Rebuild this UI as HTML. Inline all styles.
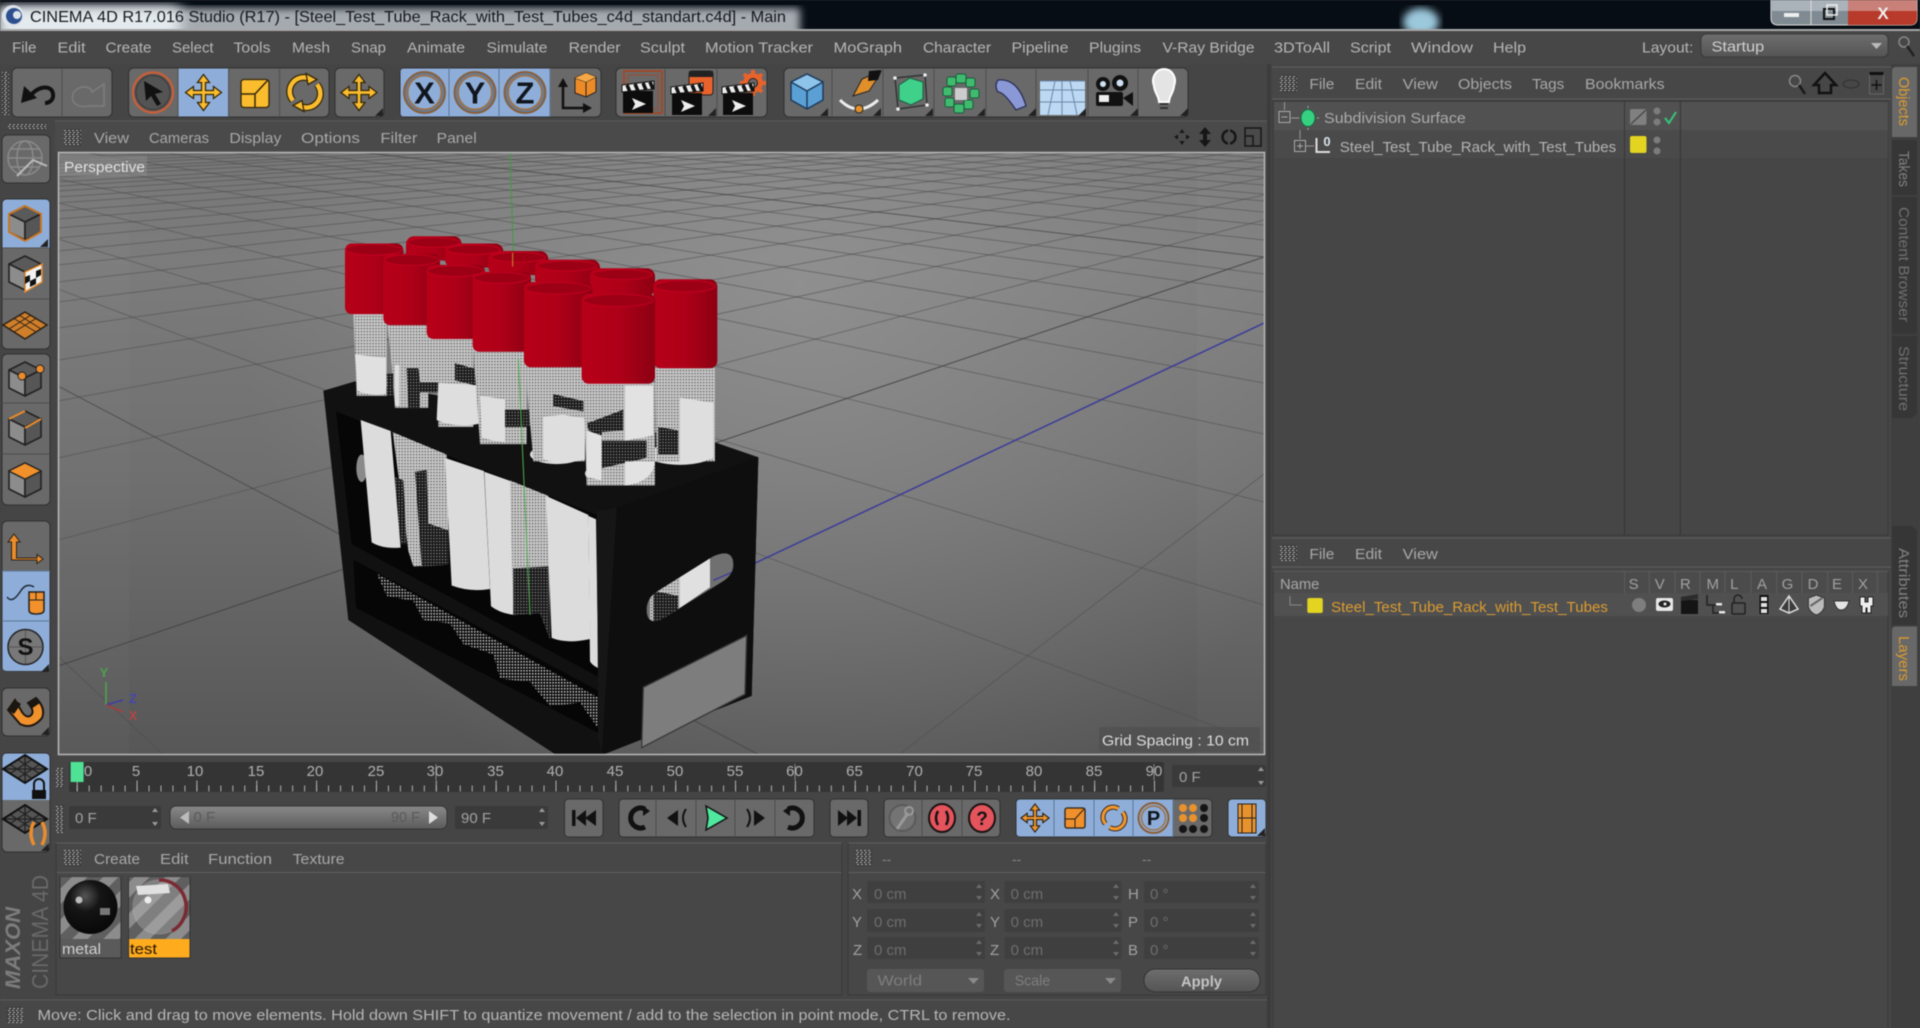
<!DOCTYPE html>
<html><head><meta charset="utf-8"><title>CINEMA 4D</title>
<style>
html,body{margin:0;padding:0;background:#454545;overflow:hidden;width:1920px;height:1028px}
#w{width:1920px;height:1028px;overflow:hidden;position:relative}
svg{display:block;overflow:hidden;font-family:"Liberation Sans",sans-serif;filter:blur(.4px)}
.m{fill:#b6b6b6;font-size:15px}
.p{fill:#a8a8a8;font-size:15px}
.d{fill:#6e6e6e;font-size:15px}
.l{fill:#a2a2a2;font-size:15px}
.t{fill:#b0b0b0;font-size:15px;text-anchor:middle}
.btn{fill:#696969;stroke:#303030;stroke-width:1}
.blue{fill:#8eaed9}
.dv{stroke:#4e4e4e;stroke-width:1}
.fld{fill:#3a3a3a}
.fd2{fill:#3f3f3f}
.y{fill:#fbbd2e;stroke:#33270a;stroke-width:1.3}
.o{fill:#f0902c;stroke:#2a2018;stroke-width:1.3}
.c{text-anchor:middle}
</style></head><body><div id="w">
<svg width="1920" height="1028" viewBox="0 0 1920 1028" xmlns="http://www.w3.org/2000/svg">
<defs>
<pattern id="grip" width="4" height="4" patternUnits="userSpaceOnUse"><rect width="4" height="4" fill="#3c3c3c"/><rect x="1" y="0" width="2" height="1" fill="#b0b0b0"/><rect x="0" y="2" width="2" height="1" fill="#b0b0b0"/></pattern>
<pattern id="dw" width="8.7" height="8.7" patternUnits="userSpaceOnUse"><rect width="8.7" height="8.7" fill="#c6c6c6"/><rect width="3.5" height="3.5" fill="#4c4c4c"/></pattern>
<pattern id="dd" width="8.7" height="8.7" patternUnits="userSpaceOnUse"><rect width="8.7" height="8.7" fill="#1a1a1a"/><rect width="3" height="3" fill="#bbbbbb"/></pattern>
<pattern id="db" width="8.7" height="8.7" patternUnits="userSpaceOnUse"><rect width="8.7" height="8.7" fill="#080808"/><rect width="4.5" height="4.5" fill="#d4d4d4"/></pattern>
<pattern id="stripe" width="22" height="22" patternUnits="userSpaceOnUse" patternTransform="rotate(45)"><rect width="22" height="22" fill="#8c8c8c"/><rect width="11" height="22" fill="#5f5f5f"/></pattern>
<linearGradient id="vg" x1="0" y1="0" x2="0" y2="1"><stop offset="0" stop-color="#777"/><stop offset=".18" stop-color="#7c7c7c"/><stop offset=".55" stop-color="#6f6f6f"/><stop offset="1" stop-color="#575757"/></linearGradient>
<radialGradient id="vr" gradientUnits="userSpaceOnUse" cx="800" cy="290" r="560"><stop offset="0" stop-color="#a0a0a0" stop-opacity=".55"/><stop offset="1" stop-color="#a0a0a0" stop-opacity="0"/></radialGradient>
<linearGradient id="red" x1="0" x2="1" y1="0" y2="0"><stop offset="0" stop-color="#b60018"/><stop offset=".5" stop-color="#ae0018"/><stop offset="1" stop-color="#8c0012"/></linearGradient>
<linearGradient id="sl" x1="0" x2="0" y1="0" y2="1"><stop offset="0" stop-color="#888"/><stop offset="1" stop-color="#5c5c5c"/></linearGradient>
<linearGradient id="dr" x1="0" x2="0" y1="0" y2="1"><stop offset="0" stop-color="#6e6e6e"/><stop offset="1" stop-color="#545454"/></linearGradient>
<radialGradient id="ball" cx=".4" cy=".3" r=".8"><stop offset="0" stop-color="#555"/><stop offset=".35" stop-color="#151515"/><stop offset="1" stop-color="#050505"/></radialGradient>
<filter id="b8"><feGaussianBlur stdDeviation="7"/></filter>
<filter id="b3"><feGaussianBlur stdDeviation="4"/></filter>
<clipPath id="vc"><rect x="59" y="153" width="1205" height="601"/></clipPath>
<clipPath id="hole"><path d="M1040 1130Q1040 1095 1075 1075L1240 975Q1300 950 1300 1000Q1300 1030 1265 1050L1090 1155Q1040 1180 1040 1130Z"/></clipPath>
<path id="mv" d="M0-18L6-10H2V-2H10V-6L18 0L10 6V2H2V10H6L0 18L-6 10H-2V2H-10V6L-18 0L-10-6V-2H-2V-10H-6Z"/>
<g id="cube"><path d="M0-17L16-9L0-1L-16-9Z" fill="#5a5a5a" stroke="#222" stroke-width="1.6" stroke-linejoin="round"/><path d="M-16-9L0-1V17L-16 9Z" fill="#8c8c8c" stroke="#222" stroke-width="1.6" stroke-linejoin="round"/><path d="M16-9L0-1V17L16 9Z" fill="#565656" stroke="#222" stroke-width="1.6" stroke-linejoin="round"/></g>
<g id="clap"><rect x="-15" y="-4" width="30" height="22" fill="#0c0c0c"/><path d="M-16-10L16-14V-6L-16-3Z" fill="#eee" stroke="#111"/><path d="M-11-10l3 7M-3-11l3 7M5-12l3 7M12-13l3 7" stroke="#111" stroke-width="3.5"/><path d="M-6 3L8 9L-6 15L-3 9Z" fill="#eee"/></g>
<g id="plate"><path d="M0-14L22 0L0 14L-22 0Z" stroke="#222" stroke-width="1.5" fill="#555"/><g stroke="#222" stroke-width="1.3"><path d="M-15-4.500L7 9.500M-7.500-9.500L14.500 4.500M7-9.500L-15 4.500M14.500-4.500L-7.500 9.500M0-14L0 14M-22 0H22"/></g></g>
<path id="tri" d="M0 8L8 8L8 0Z" fill="#222"/>
</defs>

<rect width="1920" height="1028" fill="#454545"/>

<!-- title bar -->
<rect width="1920" height="30" fill="#070d14"/>
<rect x="0" y="8" width="800" height="30" fill="#a4aab0" filter="url(#b3)"/>
<rect x="0" y="6" width="180" height="36" fill="#e4ebef" filter="url(#b8)"/>
<ellipse cx="1421" cy="22" rx="18" ry="14" fill="#9cc8dc" filter="url(#b3)"/>
<circle cx="13" cy="16" r="11" fill="#dfe4ea"/><circle cx="14" cy="16" r="8" fill="#2d4f8e"/><circle cx="17" cy="15" r="4" fill="#dfe4ea"/>
<text x="30" y="22" font-size="16" fill="#16181c" textLength="756" lengthAdjust="spacingAndGlyphs">CINEMA 4D R17.016 Studio (R17) - [Steel_Test_Tube_Rack_with_Test_Tubes_c4d_standart.c4d] - Main</text>
<path d="M1771 0V18Q1771 25 1778 25H1910Q1917 25 1917 18V0Z" fill="#7f8a92" stroke="#ddd"/>
<path d="M1848 0H1917V18Q1917 25 1910 25H1848Z" fill="#b83a2a"/><rect x="1848" y="0" width="69" height="11" fill="#c98078"/>
<rect x="1772" y="0" width="76" height="11" fill="#aab3ba"/>
<path d="M1811 0V25" stroke="#ddd"/>
<rect x="1784" y="13" width="15" height="4" fill="#eee"/>
<rect x="1824" y="9" width="10" height="10" fill="none" stroke="#111" stroke-width="2"/><rect x="1827" y="5" width="10" height="10" fill="none" stroke="#eee" stroke-width="1.5"/>
<text x="1883" y="19" font-size="17" font-weight="bold" fill="#eee" class="c">X</text>
<rect y="29" width="1920" height="2" fill="#a8a8a8"/>

<!-- menu -->
<rect y="31" width="1920" height="33" fill="#474747"/>
<g class="m">
<text x="12" y="52.500" textLength="24.500" lengthAdjust="spacingAndGlyphs">File</text>
<text x="57.500" y="52.500" textLength="28" lengthAdjust="spacingAndGlyphs">Edit</text>
<text x="105.500" y="52.500" textLength="46" lengthAdjust="spacingAndGlyphs">Create</text>
<text x="172" y="52.500" textLength="41.600" lengthAdjust="spacingAndGlyphs">Select</text>
<text x="233.500" y="52.500" textLength="37" lengthAdjust="spacingAndGlyphs">Tools</text>
<text x="292" y="52.500" textLength="38" lengthAdjust="spacingAndGlyphs">Mesh</text>
<text x="351" y="52.500" textLength="35" lengthAdjust="spacingAndGlyphs">Snap</text>
<text x="407" y="52.500" textLength="58" lengthAdjust="spacingAndGlyphs">Animate</text>
<text x="486.500" y="52.500" textLength="61" lengthAdjust="spacingAndGlyphs">Simulate</text>
<text x="568.600" y="52.500" textLength="52" lengthAdjust="spacingAndGlyphs">Render</text>
<text x="640" y="52.500" textLength="45" lengthAdjust="spacingAndGlyphs">Sculpt</text>
<text x="705" y="52.500" textLength="108" lengthAdjust="spacingAndGlyphs">Motion Tracker</text>
<text x="833.500" y="52.500" textLength="68.500" lengthAdjust="spacingAndGlyphs">MoGraph</text>
<text x="923" y="52.500" textLength="68" lengthAdjust="spacingAndGlyphs">Character</text>
<text x="1011.500" y="52.500" textLength="57" lengthAdjust="spacingAndGlyphs">Pipeline</text>
<text x="1089" y="52.500" textLength="52" lengthAdjust="spacingAndGlyphs">Plugins</text>
<text x="1162.500" y="52.500" textLength="92" lengthAdjust="spacingAndGlyphs">V-Ray Bridge</text>
<text x="1274" y="52.500" textLength="56" lengthAdjust="spacingAndGlyphs">3DToAll</text>
<text x="1350" y="52.500" textLength="41" lengthAdjust="spacingAndGlyphs">Script</text>
<text x="1411" y="52.500" textLength="62" lengthAdjust="spacingAndGlyphs">Window</text>
<text x="1493" y="52.500" textLength="33" lengthAdjust="spacingAndGlyphs">Help</text>
<text x="1642" y="52.500" textLength="51.400" lengthAdjust="spacingAndGlyphs">Layout:</text>
</g>
<rect x="1701" y="34" width="187" height="23" rx="5" fill="url(#dr)" stroke="#3a3a3a"/>
<text x="1711.500" y="51.500" class="m" textLength="52.700" lengthAdjust="spacingAndGlyphs" style="fill:#d0d0d0">Startup</text>
<path d="M1871 43H1882L1876.500 49Z" fill="#bbb"/>
<circle cx="1904" cy="42" r="5" fill="none" stroke="#888" stroke-width="1.5"/><path d="M1907 46L1914 56" stroke="#222" stroke-width="2.500"/>

<!-- top toolbar -->
<rect x="2" y="72" width="7" height="43" fill="url(#grip)"/>
<rect x="12" y="68" width="100" height="49" rx="5" class="btn"/>
<path d="M62 68V117" class="dv"/>
<path d="M30 97C36 86 52 84 53 94C54 100 49 103 45 103" fill="none" stroke="#111" stroke-width="4"/><path d="M21 103L24 86L37 98Z" fill="#111"/>
<path d="M73 94C76 86 90 84 92 92L104 84V106H88C80 108 70 104 73 94Z" fill="none" stroke="#7e7e7e" stroke-width="1.500"/>

<rect x="128.600" y="68" width="200.400" height="49" rx="5" class="btn"/>
<rect x="178" y="68.500" width="50.500" height="48" class="blue"/>
<path d="M178 68V117M228.600 68V117M279.600 68V117" class="dv"/>
<ellipse cx="153" cy="92.500" rx="20" ry="20" fill="#545454" stroke="#c4603c" stroke-width="2.500"/>
<ellipse cx="153" cy="92.500" rx="17" ry="17" fill="none" stroke="#3a3a3a"/>
<path d="M144 81L163 92L155 94L161 104L157 106L151 96L146 101Z" fill="#111"/>
<use href="#mv" x="203.500" y="92.500" class="y"/>
<rect x="241" y="79.500" width="28" height="28" rx="3" class="y"/>
<path d="M241 94H255V107.500M255 94L268 80" fill="none" stroke="#33270a" stroke-width="1.500"/>
<g transform="translate(305,92.500)"><path d="M-12 8A14 14 0 0 1 6-13M12-8A14 14 0 0 1-6 13" fill="none" stroke="#33270a" stroke-width="7"/><path d="M-12 8A14 14 0 0 1 6-13M12-8A14 14 0 0 1-6 13" fill="none" stroke="#fbbd2e" stroke-width="4.500"/><path d="M1-19L12-13L3-8ZM-1 19L-12 13L-3 8Z" class="y"/></g>

<rect x="335" y="68" width="49" height="49" rx="5" class="btn"/>
<use href="#mv" x="359" y="92.500" class="y"/><use href="#tri" x="375" y="108"/>

<rect x="400" y="68" width="201" height="49" rx="5" class="btn"/>
<rect x="400.500" y="68.500" width="150" height="48" rx="3" class="blue"/>
<path d="M449 68V117M499 68V117M550 68V117" stroke="#5d7596"/>
<g fill="#5f7fa8" stroke="#8a5f38" stroke-width="2"><circle cx="424.500" cy="92.500" r="20.500"/><circle cx="475" cy="92.500" r="20.500"/><circle cx="525" cy="92.500" r="20.500"/></g>
<g fill="#8eaed9" stroke="#9c7248" stroke-width="2"><circle cx="424.500" cy="92.500" r="17"/><circle cx="475" cy="92.500" r="17"/><circle cx="525" cy="92.500" r="17"/></g>
<g font-size="31" font-weight="bold" fill="#11161e" class="c"><text x="424.500" y="103.500">X</text><text x="475" y="103.500">Y</text><text x="525" y="103.500">Z</text></g>
<path d="M563 81V108H590" fill="none" stroke="#111" stroke-width="2.500"/><path d="M563 78L558 87H568ZM592 108L583 103V113Z" fill="#111"/>
<path d="M575 78L586 73L596 77V92L586 97L575 93Z" fill="#ed8b27" stroke="#222"/><path d="M575 78L586 82L596 77M586 82V97" fill="none" stroke="#222"/><path d="M575 78L586 73L596 77L586 82Z" fill="#f6a745"/>

<rect x="616" y="68" width="151" height="49" rx="5" class="btn"/>
<path d="M665 68V117M717 68V117" class="dv"/>
<rect x="624" y="71" width="38" height="42" fill="none" stroke="#9e4a2a" stroke-width="2"/><rect x="628" y="75" width="30" height="34" fill="none" stroke="#9e4a2a" stroke-width="1"/>
<use href="#clap" x="638" y="95"/>
<rect x="689" y="71" width="24" height="24" rx="3" fill="#e8622b" stroke="#222"/><rect x="689" y="71" width="24" height="6" fill="#222"/>
<use href="#clap" x="687" y="97"/><use href="#tri" x="708" y="108"/>
<g transform="translate(753,83)"><circle r="10" fill="#e8622b"/><circle r="4.500" fill="#696969" stroke="#222"/><path d="M0-13V-8M0 13V8M-13 0H-8M13 0H8M-9-9L-6-6M9 9L6 6M-9 9L-6 6M9-9L6-6" stroke="#e8622b" stroke-width="4"/></g>
<use href="#clap" x="738" y="97"/>

<rect x="784" y="68" width="404" height="49" rx="5" class="btn"/>
<path d="M832 68V117M883 68V117M934 68V117M986 68V117M1036 68V117M1088 68V117M1138 68V117" class="dv"/>
<g transform="translate(807,91)" stroke="#1e3a5c" stroke-width="1.500" stroke-linejoin="round"><path d="M0-17L16-9V9L0 18L-16 9V-9Z" fill="#5aa0d4"/><path d="M0-17L16-9L0 0L-16-9Z" fill="#8fc4ea"/><path d="M0 0V18" /></g>
<use href="#tri" x="820" y="108"/>
<path d="M881 71L862 79L853 96L869 91L879 76Z" fill="#e08f2a" stroke="#222"/><path d="M881 70L869 71L868 81L878 80Z" fill="#111"/>
<path d="M840 100Q858 118 878 100" fill="none" stroke="#eee" stroke-width="3"/><circle cx="859" cy="109" r="4" fill="#e08f2a" stroke="#222"/><use href="#tri" x="873" y="108"/>
<path d="M895 78L925 75L927 105L898 109Z" fill="none" stroke="#333" stroke-width="1.500"/>
<path d="M899 85L910 78L923 82L923 99L911 105L899 100Z" fill="#3fd08a" stroke="#1a5a3a"/><g fill="#eee"><circle cx="895" cy="78" r="1.800"/><circle cx="925" cy="75" r="1.800"/><circle cx="927" cy="105" r="1.800"/><circle cx="898" cy="109" r="1.800"/></g><use href="#tri" x="925" y="108"/>
<g fill="#3fba6e" stroke="#1a5a3a"><rect x="956" y="74" width="10" height="9" rx="2"/><rect x="966" y="78" width="9" height="9" rx="2"/><rect x="970" y="89" width="9" height="9" rx="2"/><rect x="964" y="100" width="9" height="9" rx="2"/><rect x="954" y="104" width="10" height="9" rx="2"/><rect x="945" y="98" width="9" height="9" rx="2"/><rect x="943" y="87" width="9" height="9" rx="2"/><rect x="947" y="77" width="9" height="9" rx="2"/></g><rect x="955" y="88" width="12" height="12" fill="#ccc"/><use href="#tri" x="977" y="108"/>
<path d="M998 80Q1018 78 1026 106L1016 110Q1004 92 998 92Q994 86 998 80Z" fill="#8a98d6" stroke="#2a2f55" stroke-width="1.300"/><use href="#tri" x="1028" y="108"/>
<rect x="1040" y="81" width="45" height="34" fill="#bcd8f2"/><path d="M1040 81H1085M1040 90H1085M1040 102H1085M1055 81L1048 115M1062 81V115M1070 81L1077 115" stroke="#6a88a8"/><use href="#tri" x="1078" y="108"/>
<g transform="translate(1112,93)"><circle cx="-9" cy="-9" r="7" fill="#111"/><circle cx="-9" cy="-9" r="3" fill="#cfe0f0"/><circle cx="8" cy="-10" r="8" fill="#111"/><circle cx="8" cy="-10" r="3.500" fill="#cfe0f0"/><rect x="-16" y="-1" width="27" height="14" rx="2" fill="#111"/><rect x="-13" y="2" width="10" height="7" fill="#eee"/><path d="M11 5L21-1V13Z" fill="#111"/></g><use href="#tri" x="1130" y="108"/>
<g transform="translate(1164,90)"><path d="M-10-4A11 12 0 1 1 10-4C10 2 5 6 5 12H-5C-5 6-10 2-10-4Z" fill="#e4e4e4" stroke="#fff" stroke-width="2"/><path d="M-4 14H4M-4 18H4" stroke="#333" stroke-width="2"/></g><use href="#tri" x="1180" y="108"/>

<!-- left toolbar -->
<rect x="8" y="123" width="38" height="7" fill="url(#grip)"/>
<rect x="2" y="135" width="48" height="48" rx="5" class="btn"/>
<g transform="translate(25,158)" fill="none" stroke="#8a8a8a" stroke-width="1.500"><circle r="17"/><ellipse rx="8" ry="17"/><path d="M-17 0H17M-14-9H14M-14 9H14"/><path d="M-8 18L8 2L22 8" stroke="#bbb" stroke-width="2"/></g>

<rect x="2" y="199" width="48" height="150" rx="5" class="btn"/>
<path d="M2.500 248V204Q2.500 199.500 7 199.500H45Q49.500 199.500 49.500 204V248Z" class="blue"/>
<path d="M2 248H50M2 299H50" class="dv"/>
<use href="#cube" x="25" y="223"/><path d="M25 206L41 214V232L25 241L9 232V214Z" fill="none" stroke="#c97726" stroke-width="2"/>
<use href="#tri" x="40" y="239"/>
<use href="#cube" x="25" y="273"/><path d="M25 272L42 264V282L25 292Z" fill="#f2f2f2" stroke="#e08a2e" stroke-width="1.500"/><path d="M25 277l5-2v6l-5 3zM30 281l6-3v6l-6 3zM36 271l5-2v6l-5 3z" fill="#111"/>
<path d="M25 312L47 325L25 339L3 325Z" fill="#cf7f2a" stroke="#2c2015" stroke-width="1.500"/><path d="M14 318.500L36 332M19 315L41 329M31 315L9 329M36 318.500L14 332" stroke="#2c2015"/>

<rect x="2" y="354" width="48" height="151" rx="5" class="btn"/>
<path d="M2 403H50M2 454H50" class="dv"/>
<use href="#cube" x="25" y="379"/><circle cx="22" cy="376" r="4" fill="#ea8c2c" stroke="#222"/><circle cx="40" cy="369" r="4" fill="#ea8c2c" stroke="#222"/>
<use href="#cube" x="25" y="428"/><path d="M9 419L25 411M25 428L41 419" stroke="#ea8c2c" stroke-width="2"/>
<use href="#cube" x="25" y="480"/><path d="M25 463L41 471L25 479L9 471Z" fill="#f2912b" stroke="#222"/>

<rect x="2" y="521" width="48" height="150" rx="5" class="btn"/>
<path d="M2.500 571H49.500V667Q49.500 671 45 671H7Q2.500 671 2.500 667Z" class="blue"/>
<path d="M2 571H50M2 621H50" stroke="#5d7596"/>
<path d="M14 534L20 542H16.500V558H37V554.500L43 559L37 563.500V560H11.500V542H8Z" fill="#ea8c2c" stroke="#2a2018"/>
<path d="M7 597Q12 604 20 592Q26 582 34 587" fill="none" stroke="#1d2a3a" stroke-width="1.500"/>
<path d="M29 592H44V610Q44 614 36 614Q29 614 29 610Z" fill="#f2912b" stroke="#222" stroke-width="1.500"/><path d="M29 600H44M36 592V600" stroke="#222"/>
<circle cx="25.500" cy="647" r="17.500" fill="#787878" stroke="#222" stroke-width="1.500"/><path d="M8 647H43M25.500 630V664" stroke="#555"/><text x="25.500" y="655" font-size="24" font-weight="bold" fill="#111" class="c">S</text><use href="#tri" x="41" y="664"/>

<rect x="2" y="688" width="48" height="48" rx="5" class="btn"/>
<path d="M15 700L8 710L20 724Q32 730 42 718Q46 708 36 698L28 703Q36 712 30 716Q26 718 22 712Z" fill="#f0912c" stroke="#1c1610" stroke-width="2"/><path d="M15 700L8 710L14 714L21 704ZM36 698L28 703L31 709L40 703Z" fill="#1c1610"/><use href="#tri" x="41" y="727"/>

<rect x="2" y="753" width="48" height="99" rx="5" class="btn"/>
<path d="M2.500 800V758Q2.500 753.500 7 753.500H45Q49.500 753.500 49.500 758V800Z" class="blue"/>
<use href="#plate" x="25" y="769" /><path d="M25 755L47 769L25 783L3 769Z" fill="none" stroke="#111" stroke-width="2"/>
<path d="M34 792V784a5 5 0 0 1 10 0v8" fill="none" stroke="#111" stroke-width="2"/><rect x="32" y="790" width="14" height="9" fill="#111"/>
<use href="#plate" x="25" y="819"/><path d="M25 805L47 819L25 833L3 819Z" fill="none" stroke="#111" stroke-width="2"/>
<path d="M34 822Q28 833 34 845M42 822Q48 833 42 845" fill="none" stroke="#ea8c2c" stroke-width="3.500"/><use href="#tri" x="41" y="843"/>

<g transform="rotate(-90)">
<text x="-989" y="20" font-size="21" font-weight="bold" font-style="italic" fill="#7d7d7d" textLength="82" lengthAdjust="spacingAndGlyphs">MAXON</text>
<text x="-989" y="48" font-size="23" fill="#696969" textLength="114" lengthAdjust="spacingAndGlyphs">CINEMA 4D</text>
</g>

<!-- view panel -->
<rect x="55" y="121" width="1213" height="31" fill="#4a4a4a"/>
<path d="M55 121H1268" stroke="#5c5c5c"/>
<rect x="64" y="129" width="17" height="17" fill="url(#grip)"/>
<g class="p">
<text x="94" y="143" textLength="35" lengthAdjust="spacingAndGlyphs">View</text>
<text x="149" y="143" textLength="60" lengthAdjust="spacingAndGlyphs">Cameras</text>
<text x="229.400" y="143" textLength="52" lengthAdjust="spacingAndGlyphs">Display</text>
<text x="301" y="143" textLength="59" lengthAdjust="spacingAndGlyphs">Options</text>
<text x="380.400" y="143" textLength="37" lengthAdjust="spacingAndGlyphs">Filter</text>
<text x="436.700" y="143" textLength="40" lengthAdjust="spacingAndGlyphs">Panel</text>
</g>
<g fill="#161616"><path d="M1182 129l2.500 4h-5zM1182 145l2.500-4h-5zM1174 137l4-2.500v5zM1190 137l-4-2.500v5z"/><path d="M1205 127l6 7h-4v6h4l-6 7l-6-7h4v-6h-4z"/></g>
<circle cx="1229" cy="137" r="6.500" fill="none" stroke="#161616" stroke-width="2.500"/><path d="M1229 128v18" stroke="#4a4a4a" stroke-width="2"/>
<rect x="1245" y="128" width="16" height="18" fill="none" stroke="#161616" stroke-width="1.500"/><path d="M1245 136H1253V146" fill="none" stroke="#161616" stroke-width="1.500"/>

<!-- viewport -->
<rect x="58" y="152" width="1207" height="603" fill="url(#vg)"/>
<rect x="58" y="152" width="1207" height="603" fill="url(#vr)"/>
<g clip-path="url(#vc)">
<rect x="59" y="153" width="70" height="601" fill="#fff" opacity=".02"/><rect x="1197" y="153" width="67" height="601" fill="#fff" opacity=".025"/>
<path fill="none" stroke="#4c4c4c" stroke-width="1" opacity=".55" d="M1264 474L892 760M1264 257L58 666M1264 220L58 540M1264 195L58 458M1264 178L58 401M1264 166L58 360M1264 157L58 328M1264 149L58 302M1264 143L58 282M1264 138L58 265M1264 134L58 251M1264 130L58 238M1264 127L58 228M1264 125L58 219M1264 122L58 211M1264 120L58 203M1264 118L58 197M1264 116L58 191M1264 115L58 186M1264 113L58 182M1264 112L58 177M1264 111L58 173M1264 110L58 170M1264 109L58 166M1264 108L58 163M1264 107L58 160M1264 106L58 158"/>
<path fill="none" stroke="#4c4c4c" stroke-width="1" opacity=".55" d="M58 656L169 760M58 289L1264 745M58 239L1264 605M58 203L1264 502M58 179L1264 434M58 161L1264 383M58 148L1264 346M58 137L1264 315M58 129L1264 292M58 123L1264 274M58 111L1264 240M58 105L1264 225M58 101L1264 212M58 97L1264 201M58 94L1264 194M58 91L1264 185M58 88L1264 177M58 86L1264 170M58 83L1264 163M58 82L1264 158M58 80L1264 154"/>
<path fill="none" stroke="#404040" stroke-width="1" opacity=".7" d="M58 117L1264 257M1264 257L58 666M58 386L769 760"/>
<path d="M510 152L515 300" stroke="#3f9a3f" stroke-width="1"/>
<path d="M713 583L1264 323" stroke="#3b3a9a" stroke-width="1.500"/>

<!-- rack: zoom coordinate space -->
<g transform="translate(300,220) scale(.33333,.34483)">
<path d="M70 495L165 468L1245 645L1375 688L1355 1380L905 1552L770 1552L145 1160Z" fill="#111"/>
<path d="M108 555L890 855L895 1325L155 940Z" fill="#060606"/>
<path d="M160 985L895 1365L900 1490L168 1125Z" fill="#060606"/>
<path d="M230 1025L895 1385V1475L840 1400L750 1410L690 1340L600 1330L580 1260L490 1230L450 1170L370 1160L340 1105L260 1090Z" fill="url(#db)"/>
<ellipse cx="185" cy="720" rx="16" ry="40" fill="#8a8a8a"/>
<!-- lower tubes -->
<path d="M278 615L440 680L445 900L440 1000L340 1005L325 960Z" fill="url(#dw)"/>
<path d="M345 730L380 725L385 880L445 900V1000L365 1005Z" fill="url(#dd)"/>
<path d="M285 745L310 755L320 940L300 940Z" fill="url(#dd)"/>
<path d="M182 580L272 612L302 950Q250 955 215 935Z" fill="#dcdcdc"/>
<path d="M435 690L552 728L570 1070Q510 1080 455 1060Z" fill="#dcdcdc"/>
<path d="M553 730L640 760V1145Q600 1140 573 1120Z" fill="#dcdcdc"/>
<path d="M630 755L745 800L750 1215L720 1140L640 1145Z" fill="url(#dw)"/>
<path d="M640 1010L745 1005L750 1215L720 1140L640 1145Z" fill="url(#dd)"/>
<path d="M738 800L865 855L870 1215Q800 1230 755 1212Z" fill="#dcdcdc"/>
<path d="M865 858L888 868L895 1300Q875 1290 870 1280Z" fill="#dcdcdc"/>
<!-- holes -->
<ellipse cx="770" cy="680" rx="80" ry="28" fill="#ddd"/><ellipse cx="960" cy="735" rx="105" ry="35" fill="#ddd"/><ellipse cx="1140" cy="680" rx="100" ry="30" fill="#ddd"/>
<!-- upper tubes -->
<path d="M1065 430H1245V700H1070Z" fill="url(#dw)"/><path d="M1140 515L1240 530V690Q1190 710 1140 705Z" fill="#dedede"/><path d="M1075 600L1135 610V680H1075Z" fill="url(#dd)"/>
<path d="M160 270H260V510H170Z" fill="url(#dw)"/><path d="M165 390L258 400V505Q210 512 172 495Z" fill="#e0e0e0"/>
<path d="M262 300H385V545H285L275 420Z" fill="url(#dw)"/><path d="M320 430H355L360 470H415V500H360V548H325Z" fill="url(#dd)"/><path d="M260 445H280V510H262Z" fill="url(#dd)"/><path d="M285 420H298V540H285Z" fill="#ddd"/>
<path d="M385 335H520V600H415V470H385Z" fill="url(#dw)"/><path d="M465 415L610 455V500L465 465Z" fill="url(#dd)"/><path d="M415 472L540 480V590Q470 605 410 580Z" fill="#dedede"/>
<path d="M520 375H680V650H540Z" fill="url(#dw)"/><path d="M615 550H730V600H615Z" fill="url(#dd)"/><path d="M540 510L615 520V645Q570 640 545 630Z" fill="#dedede"/>
<path d="M675 415H855V700H700Z" fill="url(#dw)"/><path d="M760 505L850 525V555L760 540Z" fill="url(#dd)"/><path d="M730 570L790 565L855 575V695Q790 710 730 695Z" fill="#dedede"/>
<path d="M850 470H1065V770H860Z" fill="url(#dw)"/><path d="M860 590L970 550V610L905 615V640H1040V690L905 720Z" fill="url(#dd)"/><path d="M975 480H1060V625L975 640Z" fill="#e2e2e2"/><path d="M860 610L905 625V755L860 745Z" fill="#e2e2e2"/><path d="M975 700H1065Q1060 760 975 770Z" fill="#e2e2e2"/>
<!-- caps -->
<g fill="url(#red)">
<rect x="318" y="47" width="167" height="70" rx="24"/><rect x="435" y="68" width="175" height="70" rx="24"/><rect x="565" y="90" width="180" height="70" rx="24"/><rect x="705" y="115" width="195" height="80" rx="24"/><rect x="870" y="140" width="195" height="80" rx="24"/>
<rect x="1060" y="172" width="192" height="258" rx="22"/>
<rect x="135" y="68" width="175" height="205" rx="20"/>
<rect x="250" y="98" width="170" height="207" rx="20"/>
<rect x="380" y="130" width="175" height="215" rx="20"/>
<rect x="518" y="150" width="175" height="232" rx="20"/>
<rect x="672" y="180" width="205" height="247" rx="20"/>
<rect x="845" y="213" width="220" height="262" rx="22"/>
</g>
<g fill="#9c0015" stroke="#c4001f" stroke-width="3">
<ellipse cx="402" cy="65" rx="78" ry="14"/><ellipse cx="522" cy="86" rx="80" ry="14"/><ellipse cx="655" cy="108" rx="82" ry="14"/><ellipse cx="802" cy="133" rx="90" ry="15"/><ellipse cx="967" cy="158" rx="90" ry="15"/>
<ellipse cx="1156" cy="192" rx="90" ry="17"/>
<ellipse cx="222" cy="86" rx="84" ry="16"/><ellipse cx="335" cy="116" rx="82" ry="16"/><ellipse cx="467" cy="148" rx="84" ry="16"/><ellipse cx="605" cy="168" rx="84" ry="16"/><ellipse cx="774" cy="198" rx="98" ry="17"/><ellipse cx="955" cy="233" rx="105" ry="18"/>
</g>
<path d="M638 95V135" stroke="#c8902a" stroke-width="3"/>
<path d="M655 400L690 1145" stroke="#4fae4f" stroke-width="3"/>
<!-- side -->
<path d="M950 835L1375 688L1355 1380L905 1552Z" fill="#0e0e0e"/>
<path d="M890 845L950 835L905 1552L895 1500Z" fill="#161616"/>
<path d="M1040 1130Q1040 1095 1075 1075L1240 975Q1300 950 1300 1000Q1300 1030 1265 1050L1090 1155Q1040 1180 1040 1130Z" fill="#707070"/>
<g clip-path="url(#hole)"><path d="M1050 1060L1140 1010V1130L1050 1170Z" fill="url(#dw)"/><path d="M1060 1075L1135 1090V1135L1060 1170Z" fill="url(#dd)"/><path d="M1140 1010L1230 975V1065L1140 1125Z" fill="#e0e0e0"/><path d="M1240 1045L1300 1020" stroke="#3b3a9a" stroke-width="4"/></g>
<path d="M1030 1355L1340 1205L1335 1375L1025 1530Z" fill="#7d7d7d" stroke="#3a3a3a" stroke-width="4"/>
</g>
<!-- gizmo -->
<path d="M106 705V682" stroke="#4ea64e" stroke-width="1.500"/><path d="M106 705L123 700" stroke="#3d3da8" stroke-width="1.500"/><path d="M106 705L123 712" stroke="#a83d3d" stroke-width="1.500"/>
<g font-size="13" font-weight="bold" class="c"><text x="104" y="677" fill="#4fa04f">Y</text><text x="133" y="703" fill="#4646b0">Z</text><text x="133" y="720" fill="#b04646">X</text></g>
</g>
<rect x="58.500" y="152.500" width="1206" height="602" fill="none" stroke="#b8b8b8" stroke-width="1.500"/>
<rect x="60" y="156" width="87" height="20" fill="#8a8a8a" opacity=".55"/>
<text x="64" y="172" font-size="15" fill="#e2e2e2" textLength="81" lengthAdjust="spacingAndGlyphs">Perspective</text>
<rect x="1099" y="727" width="161" height="25" rx="2" fill="#4f4f4f" opacity=".7"/>
<text x="1102" y="745.500" font-size="15" fill="#ddd" textLength="147" lengthAdjust="spacingAndGlyphs">Grid Spacing : 10 cm</text>

<!-- timeline -->
<rect x="56" y="768" width="8" height="20" fill="url(#grip)"/>
<rect x="69" y="762" width="1095" height="30" rx="2" fill="#343434"/>
<path d="M76.700 788.500H1155" stroke="#b0b0b0" stroke-width="6" stroke-dasharray="1 10.970"/>
<path d="M76.700 786H1155" stroke="#b0b0b0" stroke-width="11" stroke-dasharray="1 58.850"/>
<path d="M436 764V780M795 764V780M1154 764V780" stroke="#8c8c8c"/>
<rect x="70.600" y="762" width="13" height="20" fill="#4fe296"/>
<g class="t">
<text x="88" y="776">0</text><text x="136" y="776">5</text><text x="195" y="776">10</text><text x="256" y="776">15</text><text x="315" y="776">20</text><text x="376" y="776">25</text><text x="435" y="776">30</text><text x="495.500" y="776">35</text><text x="555" y="776">40</text><text x="615" y="776">45</text><text x="675" y="776">50</text><text x="735" y="776">55</text><text x="794.500" y="776">60</text><text x="854.500" y="776">65</text><text x="914.500" y="776">70</text><text x="974" y="776">75</text><text x="1034" y="776">80</text><text x="1094" y="776">85</text><text x="1154" y="776">90</text>
</g>
<rect x="1172" y="765" width="94" height="22" rx="2" class="fld"/>
<text x="1179" y="782" class="l">0 F</text><path d="M1258 771l3-4 3 4zM1258 781l3 4 3-4z" fill="#999"/>

<rect x="56" y="805" width="8" height="28" fill="url(#grip)"/>
<rect x="69" y="806" width="92" height="23" rx="2" class="fld"/>
<text x="75" y="823" class="l">0 F</text><path d="M152 812l3-4 3 4zM152 822l3 4 3-4z" fill="#999"/>
<rect x="170" y="806" width="277" height="23" rx="6" fill="url(#sl)" stroke="#333"/>
<path d="M189 811V824L180 817.500Z" fill="#bbb"/><path d="M429 811V824L438 817.500Z" fill="#ddd"/>
<text x="193.500" y="822" font-size="15" fill="#5a5a5a">0 F</text><text x="391" y="822" font-size="15" fill="#5a5a5a" textLength="29" lengthAdjust="spacingAndGlyphs">90 F</text>
<rect x="455" y="806" width="93" height="23" rx="2" class="fld"/>
<text x="461" y="823" class="l" textLength="30" lengthAdjust="spacingAndGlyphs">90 F</text><path d="M539 812l3-4 3 4zM539 822l3 4 3-4z" fill="#999"/>

<!-- transport -->
<rect x="564.500" y="799" width="38.500" height="38" rx="4" class="btn"/>
<rect x="572" y="810" width="3.500" height="16" fill="#111"/><path d="M576 818L586 810V826ZM585 818L596 810V826Z" fill="#111"/>
<rect x="619" y="799" width="195" height="38" rx="4" class="btn"/>
<path d="M656 799V837M696 799V837M735 799V837M775 799V837" class="dv"/>
<path d="M645 809A10 10 0 1 0 645 827" fill="none" stroke="#111" stroke-width="5"/><path d="M643 806L650 811L643 816Z" fill="#111"/>
<path d="M667 818L678 810V826Z" fill="#111"/><path d="M686 809Q680 818 686 827" fill="none" stroke="#111" stroke-width="2"/>
<path d="M706 806L727 818L706 830L708 818Z" fill="#4fe89e" stroke="#111" stroke-width="1.500"/>
<path d="M747 809Q753 818 747 827" fill="none" stroke="#111" stroke-width="2"/><path d="M754 810L765 818L754 826Z" fill="#111"/>
<path d="M788 809A10 10 0 1 1 788 827" fill="none" stroke="#111" stroke-width="5"/><path d="M790 806L783 811L790 816Z" fill="#111"/>
<rect x="830" y="799" width="38" height="38" rx="4" class="btn"/>
<path d="M838 810L848 818L838 826ZM847 810L857 818L847 826Z" fill="#111"/><rect x="857.500" y="810" width="3.500" height="16" fill="#111"/>
<rect x="884" y="799" width="116" height="38" rx="4" class="btn"/>
<path d="M922 799V837M962 799V837" class="dv"/>
<circle cx="902.500" cy="818" r="13" fill="#747474" stroke="#5a5a5a" stroke-width="2"/>
<path d="M897 829L908 813" stroke="#999" stroke-width="3"/><circle cx="909" cy="811" r="4" fill="none" stroke="#999" stroke-width="2"/>
<ellipse cx="942" cy="818" rx="13" ry="14" fill="#e4545c" stroke="#1a1212" stroke-width="2"/><path d="M938 811Q934 818 938 825M946 811Q950 818 946 825" fill="none" stroke="#1a1212" stroke-width="2.500"/>
<ellipse cx="982" cy="818" rx="13" ry="14" fill="#e4545c" stroke="#1a1212" stroke-width="2"/><text x="982" y="825" font-size="19" font-weight="bold" fill="#1a1212" class="c">?</text>
<rect x="1016" y="799" width="196" height="38" rx="4" class="btn"/>
<path d="M1016.500 803.500Q1016.500 799.500 1020 799.500H1173V836.500H1020Q1016.500 836.500 1016.500 833Z" class="blue"/>
<path d="M1054 799V837M1094 799V837M1133 799V837M1173 799V837" stroke="#5d7596"/>
<use href="#mv" transform="translate(1035,818) scale(.78)" fill="#f0962d" stroke="#2c2015" stroke-width="1.500"/>
<rect x="1065" y="808" width="20" height="20" rx="2" class="o"/><path d="M1065 819H1075V828M1075 819L1084 809" fill="none" stroke="#2a2018"/>
<g transform="translate(1114,818) scale(.72)"><path d="M-12 8A14 14 0 0 1 6-13M12-8A14 14 0 0 1-6 13" fill="none" stroke="#2a2018" stroke-width="7"/><path d="M-12 8A14 14 0 0 1 6-13M12-8A14 14 0 0 1-6 13" fill="none" stroke="#f0962d" stroke-width="4.500"/></g>
<circle cx="1153.500" cy="818" r="15" fill="#8eaed9" stroke="#8a5f38" stroke-width="2"/><circle cx="1153.500" cy="818" r="12" fill="#8eaed9" stroke="#9c7248" stroke-width="1.500"/>
<text x="1153.500" y="825" font-size="20" font-weight="bold" fill="#11161e" class="c">P</text>
<g fill="#e8922e"><circle cx="1183" cy="808" r="4"/><circle cx="1193" cy="808" r="4"/><circle cx="1183" cy="818" r="4"/><circle cx="1193" cy="818" r="4"/></g>
<g fill="#141414"><circle cx="1204" cy="808" r="4"/><circle cx="1204" cy="818" r="4"/><circle cx="1183" cy="829" r="4"/><circle cx="1193" cy="829" r="4"/><circle cx="1204" cy="829" r="4"/></g>
<rect x="1228" y="799" width="38" height="38" rx="4" class="blue" stroke="#303030"/>
<rect x="1238" y="804" width="18" height="29" fill="#e8922e" stroke="#222"/><path d="M1238 818H1256" stroke="#222"/><path d="M1242 804V833M1252 804V833" stroke="#222" stroke-width="1" /><use href="#tri" x="1257" y="828"/>

<!-- material -->
<rect x="55" y="843" width="787" height="152" fill="#474747"/>
<path d="M55 843H842M55 872.500H842" stroke="#5f5f5f"/>
<path d="M56 843V995H842V843" fill="none" stroke="#383838"/>
<rect x="64" y="850" width="17" height="16" fill="url(#grip)"/>
<g class="p">
<text x="94" y="864" textLength="46" lengthAdjust="spacingAndGlyphs">Create</text>
<text x="160" y="864" textLength="28.600" lengthAdjust="spacingAndGlyphs">Edit</text>
<text x="208" y="864" textLength="64" lengthAdjust="spacingAndGlyphs">Function</text>
<text x="292.600" y="864" textLength="52" lengthAdjust="spacingAndGlyphs">Texture</text>
</g>
<rect x="60" y="877" width="61" height="81" fill="#5a5a5a" stroke="#333"/>
<rect x="60.500" y="877" width="60" height="62" fill="url(#stripe)"/>
<ellipse cx="90.500" cy="907" rx="27" ry="27" fill="url(#ball)"/><circle cx="79" cy="900" r="3.500" fill="#bbb"/><rect x="100" y="908" width="10" height="7" fill="#777"/>
<text x="62" y="954" font-size="15" fill="#d0d0d0" textLength="39" lengthAdjust="spacingAndGlyphs">metal</text>
<rect x="128.600" y="877" width="61.400" height="81" fill="#ffab1e" stroke="#333"/>
<rect x="129" y="877" width="60.500" height="62" fill="url(#stripe)"/>
<ellipse cx="159" cy="907" rx="26" ry="27" fill="#bbb" opacity=".35" stroke="#d8c8c8"/>
<path d="M159 880A26 27 0 0 1 172 931" fill="none" stroke="#7a2a32" stroke-width="3.500"/><path d="M136 886L168 884L170 893L138 895Z" fill="#e0e0e0"/><circle cx="148" cy="900" r="3.500" fill="#eee"/>
<text x="130" y="954" font-size="15" fill="#221400" textLength="27" lengthAdjust="spacingAndGlyphs">test</text>

<!-- coordinates -->
<rect x="848" y="843" width="418" height="152" fill="#474747"/>
<path d="M848 843H1266M848 872.500H1266" stroke="#5f5f5f"/>
<path d="M848 843V995H1266V843" fill="none" stroke="#383838"/>
<rect x="855.500" y="850" width="16.500" height="16" fill="url(#grip)"/>
<g font-size="14" fill="#888"><text x="882" y="864">--</text><text x="1012" y="864">--</text><text x="1142" y="864">--</text></g>
<g class="fd2">
<rect x="867" y="881" width="118" height="22" rx="2"/><rect x="1004.500" y="881" width="117" height="22" rx="2"/><rect x="1144" y="881" width="115" height="22" rx="2"/>
<rect x="867" y="909" width="118" height="23" rx="2"/><rect x="1004.500" y="909" width="117" height="23" rx="2"/><rect x="1144" y="909" width="115" height="23" rx="2"/>
<rect x="867" y="937" width="118" height="22" rx="2"/><rect x="1004.500" y="937" width="117" height="22" rx="2"/><rect x="1144" y="937" width="115" height="22" rx="2"/>
</g>
<g class="l">
<text x="852" y="899">X</text><text x="852" y="927">Y</text><text x="853" y="955">Z</text>
<text x="990" y="899">X</text><text x="990" y="927">Y</text><text x="990" y="955">Z</text>
<text x="1128" y="899">H</text><text x="1128" y="927">P</text><text x="1128" y="955">B</text>
</g>
<g class="d">
<text x="874" y="899" textLength="32.600" lengthAdjust="spacingAndGlyphs">0 cm</text><text x="874" y="927" textLength="32.600" lengthAdjust="spacingAndGlyphs">0 cm</text><text x="874" y="955" textLength="32.600" lengthAdjust="spacingAndGlyphs">0 cm</text>
<text x="1010.600" y="899" textLength="32.600" lengthAdjust="spacingAndGlyphs">0 cm</text><text x="1010.600" y="927" textLength="32.600" lengthAdjust="spacingAndGlyphs">0 cm</text><text x="1010.600" y="955" textLength="32.600" lengthAdjust="spacingAndGlyphs">0 cm</text>
<text x="1150" y="899">0 °</text><text x="1150" y="927">0 °</text><text x="1150" y="955">0 °</text>
</g>
<g fill="#6c6c6c">
<path d="M976 888l3-4 3 4zM976 896l3 4 3-4zM976 916l3-4 3 4zM976 924l3 4 3-4zM976 944l3-4 3 4zM976 952l3 4 3-4z"/>
<path d="M1113 888l3-4 3 4zM1113 896l3 4 3-4zM1113 916l3-4 3 4zM1113 924l3 4 3-4zM1113 944l3-4 3 4zM1113 952l3 4 3-4z"/>
<path d="M1250 888l3-4 3 4zM1250 896l3 4 3-4zM1250 916l3-4 3 4zM1250 924l3 4 3-4zM1250 944l3-4 3 4zM1250 952l3 4 3-4z"/>
</g>
<rect x="867" y="969" width="117" height="23" rx="3" fill="#565656"/><rect x="1004" y="969" width="117" height="23" rx="3" fill="#565656"/>
<text x="877.500" y="985.500" font-size="15" fill="#7e7e7e" textLength="44.500" lengthAdjust="spacingAndGlyphs">World</text>
<text x="1014.700" y="985.500" font-size="15" fill="#7e7e7e" textLength="35.500" lengthAdjust="spacingAndGlyphs">Scale</text>
<path d="M968 978H979L973.500 984ZM1105 978H1116L1110.500 984Z" fill="#8a8a8a"/>
<rect x="1144" y="969" width="116" height="23" rx="11" fill="url(#dr)" stroke="#333"/>
<text x="1181" y="986.500" font-size="15" font-weight="bold" fill="#c4c4c4" textLength="41" lengthAdjust="spacingAndGlyphs">Apply</text>

<!-- status -->
<rect y="1000" width="1266" height="28" fill="#474747"/>
<path d="M0 1000H1268" stroke="#5c5c5c"/>
<rect x="7" y="1007" width="16" height="16" fill="url(#grip)"/>
<text x="37.500" y="1020" class="m" textLength="973" lengthAdjust="spacingAndGlyphs">Move: Click and drag to move elements. Hold down SHIFT to quantize movement / add to the selection in point mode, CTRL to remove.</text>

<!-- separators -->
<rect x="1267" y="64" width="4" height="964" fill="#3c3c3c"/>

<!-- object manager -->
<rect x="1272" y="67" width="619" height="469" fill="#474747"/>
<path d="M1272 67H1891M1272 99H1891" stroke="#5f5f5f"/>
<rect x="1280" y="75" width="17" height="17" fill="url(#grip)"/>
<g class="p">
<text x="1309.400" y="89" textLength="24.900" lengthAdjust="spacingAndGlyphs">File</text>
<text x="1355" y="89" textLength="27" lengthAdjust="spacingAndGlyphs">Edit</text>
<text x="1402.700" y="89" textLength="35.200" lengthAdjust="spacingAndGlyphs">View</text>
<text x="1458" y="89" textLength="54" lengthAdjust="spacingAndGlyphs">Objects</text>
<text x="1532" y="89" textLength="32.300" lengthAdjust="spacingAndGlyphs">Tags</text>
<text x="1585" y="89" textLength="79.600" lengthAdjust="spacingAndGlyphs">Bookmarks</text>
</g>
<circle cx="1795" cy="81" r="5.500" fill="none" stroke="#888" stroke-width="1.500"/><path d="M1799 85L1805 94" stroke="#1a1a1a" stroke-width="2.500"/>
<path d="M1825 73L1836 85H1831V93H1819V85H1814Z" fill="none" stroke="#111" stroke-width="2.500"/>
<ellipse cx="1851" cy="84" rx="8" ry="4" fill="none" stroke="#333" stroke-width="1.200"/>
<rect x="1869.500" y="74" width="14" height="20" fill="none" stroke="#666"/><rect x="1869.500" y="72" width="14" height="3" fill="#111"/><path d="M1876.500 80V90M1871.500 85H1881.500" stroke="#111" stroke-width="1.500"/>
<rect x="1273" y="101" width="615" height="434" fill="#464646" stroke="#383838"/>
<rect x="1274" y="102" width="614" height="28" fill="#515151"/>
<rect x="1274" y="130" width="614" height="28" fill="#4a4a4a"/>
<path d="M1624.500 101V535M1680.400 101V535" stroke="#353535"/>
<path d="M1284.500 102V110M1291 118H1297" stroke="#999"/><rect x="1279" y="111.500" width="11" height="11" fill="none" stroke="#aaa"/><path d="M1281.500 117H1287.500" stroke="#aaa"/>
<ellipse cx="1308" cy="118" rx="7" ry="8.500" fill="#35d080" stroke="#1a6a44"/><path d="M1308 108v-2M1317 118h2M1299 118h-2M1308 128v2" stroke="#aaa"/>
<text x="1324" y="123" class="p" textLength="141.800" lengthAdjust="spacingAndGlyphs" style="fill:#ababab">Subdivision Surface</text>
<path d="M1300 130V139M1306 146H1314" stroke="#999"/><rect x="1294.500" y="140.500" width="11" height="11" fill="none" stroke="#aaa"/><path d="M1297 146H1303M1300 143V149" stroke="#aaa"/>
<path d="M1316.500 138V152H1330" fill="none" stroke="#ddd" stroke-width="2"/><text x="1327" y="146" font-size="13" font-weight="bold" fill="#d8e4ee" class="c">0</text>
<text x="1339.700" y="152" class="p" textLength="276.500" lengthAdjust="spacingAndGlyphs" style="fill:#b4b4b4">Steel_Test_Tube_Rack_with_Test_Tubes</text>
<rect x="1630" y="109" width="16.500" height="16" rx="2" fill="#808080"/><path d="M1631 124L1646 110" stroke="#4a4a4a" stroke-width="1.500"/>
<circle cx="1657" cy="111" r="3.500" fill="#7c7c7c"/><circle cx="1657" cy="122" r="3.500" fill="#7c7c7c"/>
<path d="M1665 118L1669 123L1676 112" fill="none" stroke="#37c47c" stroke-width="2"/>
<rect x="1630" y="136" width="16.500" height="17" rx="2" fill="#e2d421"/>
<circle cx="1657" cy="140" r="3.500" fill="#7c7c7c"/><circle cx="1657" cy="151" r="3.500" fill="#7c7c7c"/>

<!-- layer manager -->
<rect x="1272" y="538" width="619" height="490" fill="#474747"/>
<path d="M1272 538H1891M1272 567H1891" stroke="#5f5f5f"/>
<rect x="1280" y="545" width="17" height="16" fill="url(#grip)"/>
<g class="p">
<text x="1309.400" y="559" textLength="24.900" lengthAdjust="spacingAndGlyphs">File</text>
<text x="1355" y="559" textLength="27" lengthAdjust="spacingAndGlyphs">Edit</text>
<text x="1402.700" y="559" textLength="35.200" lengthAdjust="spacingAndGlyphs">View</text>
</g>
<rect x="1274" y="572" width="614" height="21" fill="#4b4b4b"/>
<path d="M1274 571.500H1888M1624.500 572V593M1649.400 572V593M1675 572V593M1700 572V593M1725 572V593M1751 572V593M1776.600 572V593M1802 572V593M1827.600 572V593M1852.500 572V593M1877.400 572V593" stroke="#5d5d5d"/>
<path d="M1273 572V1028M1888 572V1028" stroke="#383838"/>
<text x="1280" y="589" class="p" textLength="39.400" lengthAdjust="spacingAndGlyphs">Name</text>
<g class="t" style="fill:#a0a0a0"><text x="1633.600" y="589">S</text><text x="1659.700" y="589">V</text><text x="1685.400" y="589">R</text><text x="1712.800" y="589">M</text><text x="1734.300" y="589">L</text><text x="1762" y="589">A</text><text x="1787.400" y="589">G</text><text x="1813" y="589">D</text><text x="1837" y="589">E</text><text x="1863" y="589">X</text></g>
<rect x="1274" y="593" width="614" height="23" fill="#505050"/>
<path d="M1290 596V605H1302" fill="none" stroke="#888"/>
<rect x="1307.300" y="598" width="15.500" height="15" rx="2" fill="#e2d421"/>
<text x="1331" y="612" font-size="15" fill="#dc9c30" textLength="277" lengthAdjust="spacingAndGlyphs">Steel_Test_Tube_Rack_with_Test_Tubes</text>
<circle cx="1639" cy="605" r="7" fill="#7e7e7e"/>
<rect x="1656" y="598" width="17" height="13" rx="2" fill="#e8e8e8"/><ellipse cx="1664.500" cy="604" rx="6" ry="3.500" fill="#222"/><circle cx="1665" cy="604" r="1.500" fill="#eee"/>
<rect x="1681" y="600" width="17" height="14" fill="#141414"/><path d="M1681 597L1698 594V599L1681 601Z" fill="#2c2c2c"/>
<path d="M1707 595V605H1719M1713 605V613H1723" fill="none" stroke="#222" stroke-width="1.500"/><rect x="1716" y="603" width="6" height="2.500" fill="#e8e8e8"/><rect x="1719" y="611" width="6" height="2.500" fill="#e8e8e8"/>
<rect x="1732" y="603" width="13" height="11" rx="1" fill="none" stroke="#222" stroke-width="1.500"/><path d="M1734 603V599a4 4 0 0 1 8 0" fill="none" stroke="#222" stroke-width="1.500"/>
<rect x="1759.500" y="595" width="9" height="19" fill="#111"/><rect x="1761" y="597" width="6" height="4" fill="#e0e0e0"/><rect x="1761" y="603" width="6" height="4" fill="#e0e0e0"/><rect x="1761" y="609" width="6" height="4" fill="#e0e0e0"/>
<path d="M1789 596L1798 609L1789 613L1780 609Z" fill="#3c3c3c" stroke="#e0e0e0" stroke-width="1.500"/><path d="M1789 596V613" stroke="#e0e0e0"/>
<path d="M1816.400 595L1824.400 598V607Q1822.400 613 1816.400 615Q1810.400 613 1808.400 607V598Z" fill="#bcbcbc" stroke="#333"/><path d="M1810.400 606L1822.400 598" stroke="#666" stroke-width="2"/>
<path d="M1834 601H1849Q1847 610 1841 610Q1836 610 1834 601Z" fill="#e4e4e4" stroke="#333"/>
<path d="M1860 597H1865V602H1868V597H1873V606H1871V613H1867V608H1866V613H1862V606H1860Z" fill="#eee" stroke="#222"/>

<!-- side tabs -->
<rect x="1891" y="64" width="29" height="964" fill="#3f3f3f"/>
<path d="M1892 71Q1892 67 1896 67H1917V137H1892Z" fill="#686868"/>
<path d="M1892 140H1917V195H1892ZM1892 197H1917V334H1892ZM1892 336H1917V414L1912 418H1892Z" fill="#363636"/>
<path d="M1892 526H1912L1917 530V625H1892Z" fill="#363636"/>
<path d="M1892 630Q1892 626.500 1896 626.500H1917V686H1892Z" fill="#686868"/>
<g transform="rotate(90)" font-size="15">
<text x="77" y="-1899" fill="#dc9c30" textLength="49" lengthAdjust="spacingAndGlyphs">Objects</text>
<text x="151" y="-1899" fill="#808080" textLength="36" lengthAdjust="spacingAndGlyphs">Takes</text>
<text x="207" y="-1899" fill="#707070" textLength="115" lengthAdjust="spacingAndGlyphs">Content Browser</text>
<text x="346" y="-1899" fill="#707070" textLength="65" lengthAdjust="spacingAndGlyphs">Structure</text>
<text x="548" y="-1899" fill="#808080" textLength="70" lengthAdjust="spacingAndGlyphs">Attributes</text>
<text x="636" y="-1899" fill="#dc9c30" textLength="45" lengthAdjust="spacingAndGlyphs">Layers</text>
</g>
</svg>
</div></body></html>
